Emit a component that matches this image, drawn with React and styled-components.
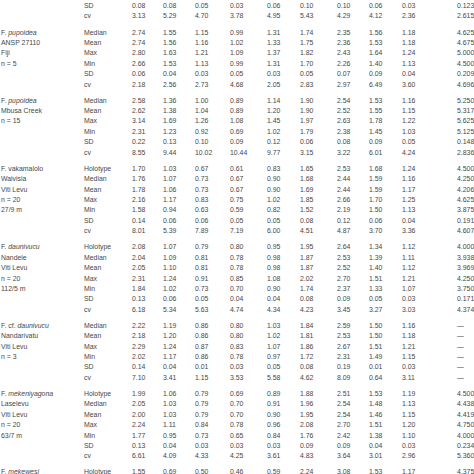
import styled, { createGlobalStyle } from 'styled-components';

const GlobalStyle = createGlobalStyle`
  html, body {
    margin: 0;
    padding: 0;
    background: #ffffff;
    overflow: hidden;
  }
  body {
    font-family: "Liberation Sans", Arial, sans-serif;
  }
`;

const Page = styled.div`
  width: 474px;
  height: 474px;
  overflow: hidden;
  padding-top: 1px;
  box-sizing: border-box;
  color: #474747;
  font-size: 6.9px;
`;

const Group = styled.div`
  display: flex;
  flex-direction: column;
  margin-bottom: 5.7px;
`;

const Row = styled.div`
  display: grid;
  grid-template-columns: 84px 48px 31px 32px 35px 37px 33px 37px 32px 33px 55px 1fr;
  height: 10.42px;
  line-height: 10.42px;
  white-space: nowrap;
`;

const Label = styled.span`
  padding-left: 1px;
  overflow: hidden;
  font-style: ${(p) => (p.$italic ? 'italic' : 'normal')};
`;

const Species = styled.span`
  font-style: italic;
`;

const Cell = styled.span`
  overflow: visible;
`;

const groups = [
  {
    labels: [],
    rows: [
      ['SD', '0.08', '0.08', '0.05', '0.03', '0.06', '0.10', '0.10', '0.06', '0.03', '0.123'],
      ['cv', '3.13', '5.29', '4.70', '3.78', '4.95', '5.43', '4.29', '4.12', '2.36', '2.615'],
    ],
  },
  {
    species: ['F. ', 'pupoidea'],
    labels: ['ANSP 27110', 'Fiji', 'n = 5'],
    rows: [
      ['Median', '2.74', '1.55', '1.15', '0.99', '1.31', '1.74', '2.35', '1.56', '1.18', '4.625'],
      ['Mean', '2.74', '1.56', '1.16', '1.02', '1.33', '1.75', '2.36', '1.53', '1.18', '4.675'],
      ['Max', '2.80', '1.63', '1.21', '1.09', '1.37', '1.82', '2.43', '1.64', '1.24', '5.000'],
      ['Min', '2.66', '1.53', '1.13', '0.99', '1.31', '1.70', '2.26', '1.40', '1.13', '4.500'],
      ['SD', '0.06', '0.04', '0.03', '0.05', '0.03', '0.05', '0.07', '0.09', '0.04', '0.209'],
      ['cv', '2.18', '2.56', '2.73', '4.68', '2.05', '2.83', '2.97', '6.49', '3.60', '4.696'],
    ],
  },
  {
    species: ['F. ', 'pupoidea'],
    labels: ['Mbusa Creek', 'n = 15'],
    rows: [
      ['Median', '2.58', '1.36', '1.00', '0.89', '1.14', '1.90', '2.54', '1.53', '1.16', '5.250'],
      ['Mean', '2.62', '1.38', '1.04', '0.89', '1.20', '1.90', '2.52', '1.55', '1.15', '5.317'],
      ['Max', '3.14', '1.69', '1.26', '1.08', '1.45', '1.97', '2.63', '1.78', '1.22', '5.625'],
      ['Min', '2.31', '1.23', '0.92', '0.69', '1.02', '1.79', '2.38', '1.45', '1.03', '5.125'],
      ['SD', '0.22', '0.13', '0.10', '0.09', '0.12', '0.06', '0.08', '0.09', '0.05', '0.148'],
      ['cv', '8.55', '9.44', '10.02', '10.44', '9.77', '3.15', '3.22', '6.01', '4.24', '2.836'],
    ],
  },
  {
    species: ['F. vakamalolo', ''],
    labels: ['Waivisia', 'Viti Levu', 'n = 20', '27/9 m'],
    rows: [
      ['Holotype', '1.70', '1.03', '0.67', '0.61', '0.83', '1.65', '2.53', '1.68', '1.24', '4.500'],
      ['Median', '1.76', '1.07', '0.73', '0.67', '0.90', '1.68', '2.44', '1.59', '1.16', '4.250'],
      ['Mean', '1.78', '1.06', '0.73', '0.67', '0.90', '1.69', '2.44', '1.59', '1.17', '4.206'],
      ['Max', '2.16', '1.17', '0.83', '0.75', '1.02', '1.85', '2.66', '1.70', '1.25', '4.625'],
      ['Min', '1.58', '0.94', '0.63', '0.59', '0.82', '1.52', '2.19', '1.50', '1.13', '3.875'],
      ['SD', '0.14', '0.06', '0.06', '0.05', '0.05', '0.08', '0.12', '0.06', '0.04', '0.191'],
      ['cv', '8.01', '5.39', '7.89', '7.19', '6.00', '4.51', '4.87', '3.70', '3.36', '4.607'],
    ],
  },
  {
    species: ['F. ', 'daunivucu'],
    labels: ['Nandele', 'Viti Levu', 'n = 20', '112/5 m'],
    rows: [
      ['Holotype', '2.08', '1.07', '0.79', '0.80', '0.95', '1.95', '2.64', '1.34', '1.12', '4.000'],
      ['Median', '2.04', '1.09', '0.81', '0.78', '0.98', '1.87', '2.53', '1.39', '1.11', '3.938'],
      ['Mean', '2.05', '1.10', '0.81', '0.78', '0.98', '1.87', '2.52', '1.40', '1.12', '3.969'],
      ['Max', '2.31', '1.24', '0.91', '0.85', '1.08', '2.02', '2.70', '1.51', '1.21', '4.250'],
      ['Min', '1.84', '1.02', '0.73', '0.70', '0.90', '1.74', '2.37', '1.33', '1.07', '3.750'],
      ['SD', '0.13', '0.06', '0.05', '0.04', '0.04', '0.08', '0.09', '0.05', '0.03', '0.171'],
      ['cv', '6.18', '5.34', '5.63', '4.74', '4.34', '4.23', '3.45', '3.27', '3.03', '4.374'],
    ],
  },
  {
    species: ['F. cf. ', 'daunivucu'],
    labels: ['Nandarivatu', 'Viti Levu', 'n = 3'],
    rows: [
      ['Median', '2.22', '1.19', '0.86', '0.80', '1.03', '1.84', '2.59', '1.50', '1.16', '—'],
      ['Mean', '2.18', '1.20', '0.86', '0.80', '1.02', '1.81', '2.53', '1.50', '1.18', '—'],
      ['Max', '2.29', '1.24', '0.87', '0.83', '1.07', '1.86', '2.67', '1.51', '1.21', '—'],
      ['Min', '2.02', '1.17', '0.86', '0.78', '0.97', '1.72', '2.31', '1.49', '1.15', '—'],
      ['SD', '0.14', '0.04', '0.01', '0.03', '0.05', '0.08', '0.19', '0.01', '0.03', '—'],
      ['cv', '7.10', '3.41', '1.15', '3.53', '5.58', '4.62', '8.09', '0.64', '3.11', '—'],
    ],
  },
  {
    species: ['F. ', 'mekeniyagona'],
    labels: ['Laselevu', 'Viti Levu', 'n = 20', '63/7 m'],
    rows: [
      ['Holotype', '1.99', '1.06', '0.79', '0.69', '0.89', '1.88', '2.51', '1.53', '1.19', '4.500'],
      ['Median', '2.05', '1.03', '0.79', '0.70', '0.91', '1.96', '2.54', '1.48', '1.13', '4.438'],
      ['Mean', '2.00', '1.03', '0.79', '0.70', '0.90', '1.95', '2.54', '1.46', '1.15', '4.419'],
      ['Max', '2.24', '1.11', '0.84', '0.78', '0.96', '2.08', '2.70', '1.51', '1.20', '4.750'],
      ['Min', '1.77', '0.95', '0.73', '0.65', '0.84', '1.76', '2.42', '1.38', '1.10', '4.000'],
      ['SD', '0.13', '0.04', '0.03', '0.03', '0.03', '0.09', '0.09', '0.04', '0.03', '0.234'],
      ['cv', '6.61', '4.09', '4.33', '4.25', '3.61', '4.83', '3.64', '3.01', '2.96', '5.360'],
    ],
  },
  {
    species: ['F. ', 'mekewesi'],
    labels: [],
    rows: [
      ['Holotype', '1.55', '0.69', '0.50', '0.46', '0.59', '2.24', '3.08', '1.53', '1.17', '4.375'],
    ],
  },
];

function GroupBlock({ group }) {
  return (
    <Group>
      {group.rows.map((row, i) => {
        let label;
        if (group.species && i === 0) {
          label = (
            <Label>
              {group.species[0]}
              {group.species[1] && <Species>{group.species[1]}</Species>}
            </Label>
          );
        } else {
          const idx = group.species ? i - 1 : i;
          label = <Label>{group.labels[idx] || ''}</Label>;
        }
        return (
          <Row key={i}>
            {label}
            {row.map((v, j) => (
              <Cell key={j}>{v}</Cell>
            ))}
          </Row>
        );
      })}
    </Group>
  );
}

export default function App() {
  return (
    <>
      <GlobalStyle />
      <Page>
        {groups.map((g, i) => (
          <GroupBlock key={i} group={g} />
        ))}
      </Page>
    </>
  );
}
